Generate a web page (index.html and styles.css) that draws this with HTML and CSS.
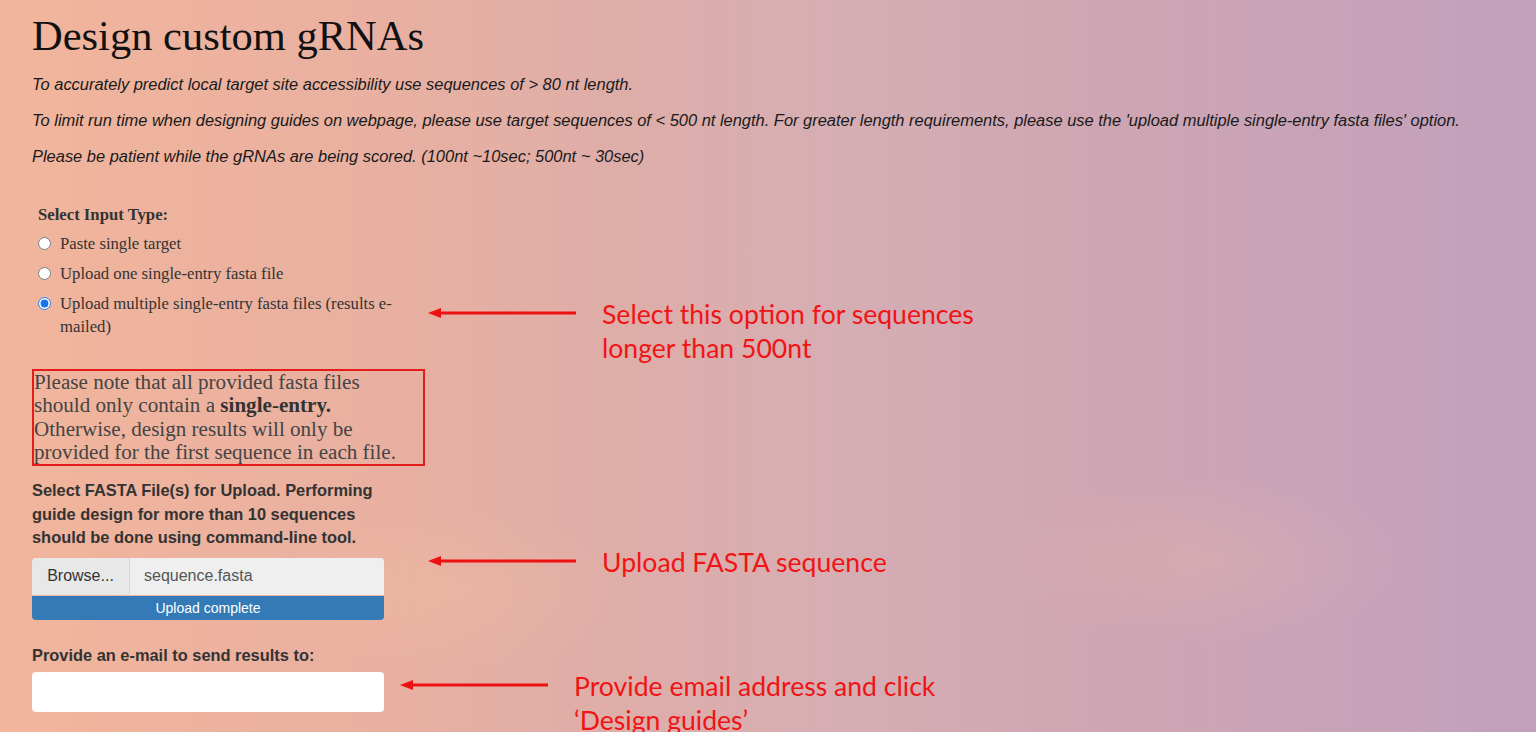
FILE: index.html
```html
<!DOCTYPE html>
<html>
<head>
<meta charset="utf-8">
<title>Design custom gRNAs</title>
<link rel="stylesheet" href="styles.css">
</head>
<body>
<div class="stage">
  <div class="page">
    <h1 class="title">Design custom gRNAs</h1>
    <p class="note">To accurately predict local target site accessibility use sequences of &gt; 80 nt length.</p>
    <p class="note">To limit run time when designing guides on webpage, please use target sequences of &lt; 500 nt length. For greater length requirements, please use the 'upload multiple single-entry fasta files' option.</p>
    <p class="note">Please be patient while the gRNAs are being scored. (100nt ~10sec; 500nt ~ 30sec)</p>

    <div class="radio-group">
      <div class="group-label">Select Input Type:</div>
      <label class="radio"><input type="radio" name="t"><span>Paste single target</span></label>
      <label class="radio"><input type="radio" name="t"><span>Upload one single-entry fasta file</span></label>
      <label class="radio"><input type="radio" name="t" checked><span>Upload multiple single-entry fasta files (results e-mailed)</span></label>
    </div>

    <div class="warn">Please note that all provided fasta files should only contain a <b>single-entry.</b> Otherwise, design results will only be provided for the first sequence in each file.</div>

    <div class="field-label">Select FASTA File(s) for Upload. Performing guide design for more than 10 sequences should be done using command-line tool.</div>
    <div class="file-input">
      <div class="browse">Browse...</div>
      <div class="filename">sequence.fasta</div>
    </div>
    <div class="progress">Upload complete</div>

    <div class="field-label email-label">Provide an e-mail to send results to:</div>
    <div class="email"></div>
  </div>

  <div class="callout c1">
    <svg class="arrow" width="150" height="34" viewBox="0 0 150 34"><polygon points="0,16 13,11 13,21" fill="#ee1111"/><rect x="10" y="14.5" width="138" height="3" fill="#ee1111"/></svg>
    <div class="callout-text">Select this option for sequences<br>longer than 500nt</div>
  </div>
  <div class="callout c2">
    <svg class="arrow" width="150" height="34" viewBox="0 0 150 34"><polygon points="0,16 13,11 13,21" fill="#ee1111"/><rect x="10" y="14.5" width="138" height="3" fill="#ee1111"/></svg>
    <div class="callout-text">Upload FASTA sequence</div>
  </div>
  <div class="callout c3">
    <svg class="arrow" width="150" height="34" viewBox="0 0 150 34"><polygon points="0,16 13,11 13,21" fill="#ee1111"/><rect x="10" y="14.5" width="138" height="3" fill="#ee1111"/></svg>
    <div class="callout-text">Provide email address and click<br>‘Design guides’</div>
  </div>
</div>
</body>
</html>
```
FILE: styles.css
```css
html, body {
  margin: 0;
  padding: 0;
  background: #ffffff;
}
.stage {
  position: relative;
  height: 732px;
  overflow: hidden;
  background:
    radial-gradient(ellipse 300px 120px at 1200px 560px, rgba(240,190,170,0.25), rgba(240,190,170,0) 70%),
    radial-gradient(ellipse 260px 120px at 450px 590px, rgba(245,195,160,0.25), rgba(245,195,160,0) 70%),
    linear-gradient(90deg, #f2b59c 0%, #e9b0a1 25%, #ddada9 42%, #d5aeb4 55%, #cea5b2 72%, #c7a3b9 88%, #c2a0bb 100%);
}
.page {
  padding: 13px 0 0 32px;
}
.title {
  margin: 0 0 15px 0;
  font-family: "Liberation Serif", "Times New Roman", serif;
  font-weight: normal;
  font-size: 42.5px;
  line-height: 46px;
  color: #111;
}
.note {
  margin: 0 0 16px 0;
  font-family: "Liberation Sans", Arial, sans-serif;
  font-style: italic;
  font-size: 16.45px;
  line-height: 20px;
  color: #1a1a1a;
}
.radio-group {
  margin-top: 38px;
  padding-left: 6px;
  width: 370px;
  font-family: "Liberation Serif", "Times New Roman", serif;
  color: #333;
}
.group-label {
  font-weight: bold;
  font-size: 16.7px;
  line-height: 22px;
  margin-bottom: 6px;
}
.radio {
  display: flex;
  align-items: flex-start;
  font-size: 16.7px;
  line-height: 23px;
  margin-bottom: 7px;
}
.radio input {
  margin: 5px 9px 0 0;
  width: 13px;
  height: 13px;
  flex: none;
  accent-color: #1a73e8;
}
.warn {
  margin-top: 31px;
  width: 380px;
  padding-right: 9px;
  border: 2px solid #e41c1c;
  font-family: "Liberation Serif", "Times New Roman", serif;
  font-size: 21.1px;
  line-height: 23.3px;
  color: #444;
}
.warn b {
  color: #333;
}
.field-label {
  margin-top: 13px;
  width: 352px;
  font-family: "Liberation Sans", Arial, sans-serif;
  font-weight: bold;
  font-size: 16.4px;
  line-height: 23.5px;
  color: #333;
}
.file-input {
  margin-top: 8px;
  width: 352px;
  height: 37px;
  display: flex;
  border-radius: 4px 4px 0 0;
  overflow: hidden;
  font-family: "Liberation Sans", Arial, sans-serif;
  font-size: 16px;
}
.browse {
  width: 97px;
  background: #e8e8e8;
  color: #333;
  display: flex;
  align-items: center;
  justify-content: center;
  border-right: 1px solid #d9d9d9;
}
.filename {
  flex: 1;
  background: #efefef;
  color: #555;
  display: flex;
  align-items: center;
  padding-left: 14px;
}
.progress {
  margin-top: 1px;
  width: 352px;
  height: 24px;
  background: #337ab7;
  border-radius: 0 0 4px 4px;
  color: #fff;
  font-family: "Liberation Sans", Arial, sans-serif;
  font-size: 14px;
  line-height: 24px;
  text-align: center;
}
.email-label {
  margin-top: 24px;
}
.email {
  margin-top: 5px;
  width: 352px;
  height: 40px;
  background: #fff;
  border-radius: 4px;
}
.callout {
  position: absolute;
  display: flex;
  align-items: flex-start;
  gap: 24px;
}
.arrow {
  flex: none;
  display: block;
}
.callout-text {
  font-family: Lato, "Noto Sans", sans-serif;
  font-size: 26.6px;
  line-height: 34px;
  color: #f01414;
}
.c1 { left: 428px; top: 297px; }
.c2 { left: 428px; top: 545px; }
.c3 { left: 400px; top: 669px; }
```
